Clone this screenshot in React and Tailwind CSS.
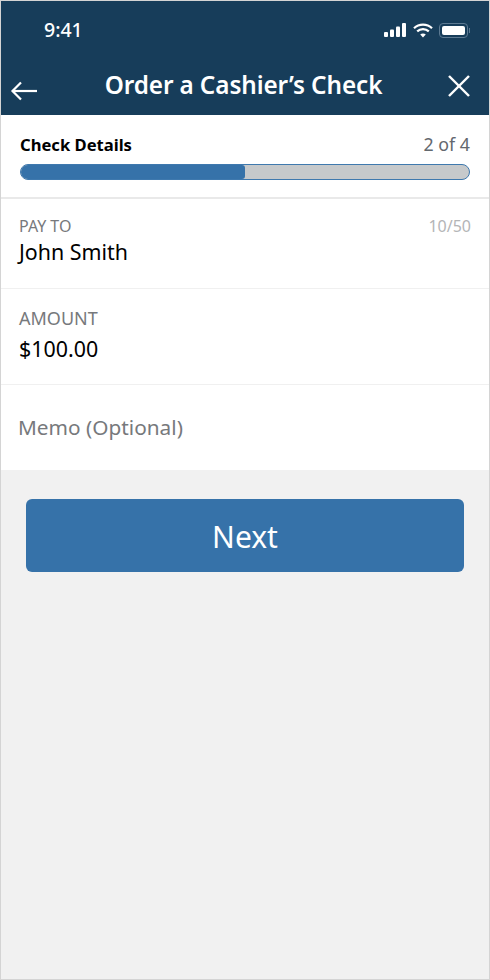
import { useState } from 'react'

const font = 'font-["Noto_Sans",sans-serif]'

function StatusIcons() {
  return (
    <div className="flex items-center gap-[6px]">
      {/* signal */}
      <svg width="23" height="14" viewBox="0 0 23 14" fill="#fff">
        <rect x="0" y="9" width="4" height="5" rx="1" />
        <rect x="6" y="6.5" width="4" height="7.5" rx="1" />
        <rect x="12" y="3.5" width="4" height="10.5" rx="1" />
        <rect x="18" y="0" width="4" height="14" rx="1" />
      </svg>
      {/* wifi */}
      <svg width="20" height="15" viewBox="0 0 20 15" fill="none" stroke="#fff" strokeWidth="2.2">
        <path d="M1 5.2C6 0.4 14 0.4 19 5.2" />
        <path d="M4.2 8.4C7.4 5.4 12.6 5.4 15.8 8.4" />
        <path d="M10 14.6L7.2 11.6C8.8 10.2 11.2 10.2 12.8 11.6Z" fill="#fff" stroke="none" />
      </svg>
      {/* battery */}
      <div className="flex items-center">
        <div className="w-[29px] h-[15px] rounded-[4px] border border-[#5d7a92] p-[2px]">
          <div className="w-full h-full rounded-[2px] bg-white" />
        </div>
        <div className="w-[1px] h-[5px] ml-[1px] bg-[#5d7a92]" />
      </div>
    </div>
  )
}

function Field({ label, value, counter, className, labelClass }) {
  return (
    <div className={`flex flex-col px-[18px] ${className}`}>
      <div className="flex justify-between items-center">
        <span className={`leading-[22px] text-[#77797c] ${labelClass}`}>{label}</span>
        {counter && <span className="text-[16px] leading-[22px] text-[#b4b5b7]">{counter}</span>}
      </div>
      <span className="text-[21.4px] leading-[30px] text-black">{value}</span>
    </div>
  )
}

export default function App() {
  const [step] = useState(2)
  const pct = (step / 4) * 100

  return (
    <div className={`w-[490px] h-[980px] flex flex-col bg-[#f1f1f1] border border-[#d4d4d4] ${font}`}>
      {/* Header */}
      <div className="h-[114px] shrink-0 flex flex-col bg-[#173d5a] text-white">
        <div className="h-[56px] flex items-center justify-between pl-[43px] pr-[19px] pt-[2px]">
          <span className="text-[19.5px] font-medium leading-none">9:41</span>
          <StatusIcons />
        </div>
        <div className="flex-1 flex items-center justify-between pl-[9px] pr-[18px]">
          <svg className="mt-[9px]" width="28" height="20" viewBox="0 0 28 20" fill="none" stroke="#fff" strokeWidth="2.2">
            <path d="M27 10H2.5" />
            <path d="M11 1.5L2.5 10L11 18.5" />
          </svg>
          <h1 className="ml-[2px] text-[24.3px] font-semibold leading-none tracking-[-0.1px] -mt-[2px]">Order a Cashier’s Check</h1>
          <svg width="24" height="24" viewBox="0 0 24 24" fill="none" stroke="#fff" strokeWidth="2.4">
            <path d="M2 2L22 22" />
            <path d="M22 2L2 22" />
          </svg>
        </div>
      </div>

      {/* Progress */}
      <div className="h-[84px] shrink-0 flex flex-col bg-white border-b-2 border-[#e9e9e9] px-[19px] pt-[17px]">
        <div className="flex justify-between items-center h-[26px]">
          <span className="text-[16.6px] font-bold text-black leading-none">Check Details</span>
          <span className="text-[17.8px] text-[#63686e] leading-none">2 of 4</span>
        </div>
        <div className="mt-[6px] h-[16px] rounded-full border border-[#3f79ae] bg-[#c6c9cb] overflow-hidden">
          <div className="h-full rounded-r-[3px] bg-[#3672a9]" style={{ width: `${pct}%` }} />
        </div>
      </div>

      {/* Fields */}
      <div className="shrink-0 flex flex-col bg-white">
        <Field label="PAY TO" value="John Smith" counter="10/50" labelClass="text-[16px]" className="h-[90px] pt-[16px] border-b border-[#f0f0f0]" />
        <Field label="AMOUNT" value="$100.00" labelClass="text-[18px] mb-[5px]" className="h-[96px] pt-[18px] border-b border-[#f0f0f0]" />
        <div className="h-[85px] flex items-center pl-[17px] text-[20.8px] text-[#77797c]">Memo (Optional)</div>
      </div>

      {/* Action */}
      <div className="px-[25px] pt-[29px]">
        <button className="w-full h-[73px] rounded-[6px] bg-[#3672a9] text-white text-[30px] leading-none pt-[2px]">Next</button>
      </div>
    </div>
  )
}
